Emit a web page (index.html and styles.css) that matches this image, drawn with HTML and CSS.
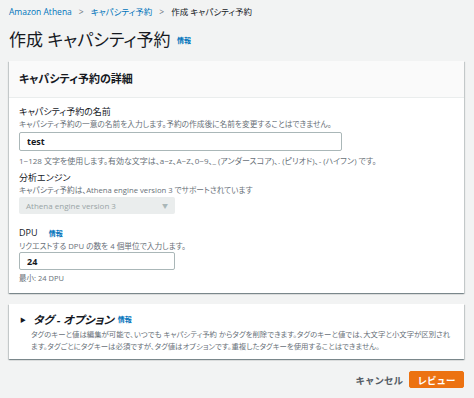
FILE: index.html
```html
<!DOCTYPE html>
<html lang="ja">
<head>
    <meta charset="UTF-8">
    <meta name="viewport" content="width=device-width, initial-scale=1.0">
    <title>作成 キャパシティ予約</title>
    <link rel="stylesheet" href="styles.css">
</head>
<body>

<div class="page">
    <nav class="breadcrumb">
        <a href="#">Amazon Athena</a>
        <span class="sep">&gt;</span>
        <a href="#">キャパシティ予約</a>
        <span class="sep">&gt;</span>
        <span class="current">作成 キャパシティ予約</span>
    </nav>

    <h1 class="title">作成 キャパシティ予約 <a class="info" href="#">情報</a></h1>

    <div class="card">
        <div class="card-header">
            <h2>キャパシティ予約の詳細</h2>
        </div>
        <div class="card-body">
            <div class="field">
                <label class="label" for="name">キャパシティ予約の名前</label>
                <p class="desc">キャパシティ予約の一意の名前を入力します。予約の作成後に名前を変更することはできません。</p>
                <input class="input wide" type="text" id="name" value="test">
                <p class="hint">1~128 文字を使用します。有効な文字は、a~z、A~Z、0~9、_ (アンダースコア)、. (ピリオド)、- (ハイフン) です。</p>
            </div>

            <div class="field field-select">
                <label class="label">分析エンジン</label>
                <p class="desc">キャパシティ予約は、Athena engine version 3 でサポートされています</p>
                <div class="select">
                    <span>Athena engine version 3</span>
                    <span class="caret">&#9660;</span>
                </div>
            </div>

            <div class="field">
                <label class="label" for="dpu">DPU <a class="info" href="#">情報</a></label>
                <p class="desc">リクエストする DPU の数を 4 個単位で入力します。</p>
                <input class="input narrow" type="text" id="dpu" value="24">
                <p class="hint">最小: 24 DPU</p>
            </div>
        </div>
    </div>

    <div class="card tags">
        <h2 class="tags-title"><span class="arrow">&#9654;</span><span class="tags-name">タグ - オプション</span> <a class="info" href="#">情報</a></h2>
        <p class="desc">タグのキーと値は編集が可能で、いつでも キャパシティ予約 からタグを削除できます。タグのキーと値では、大文字と小文字が区別されます。タグごとにタグキーは必須ですが、タグ値はオプションです。重複したタグキーを使用することはできません。</p>
    </div>

    <div class="actions">
        <button class="btn-link" type="button">キャンセル</button>
        <button class="btn-primary" type="button">レビュー</button>
    </div>
</div>

</body>
</html>
```

FILE: styles.css
```css
body {
    margin: 0;
    background-color: #f2f3f3;
    color: #16191f;
    font-family: "Open Sans", "Noto Sans CJK JP", sans-serif;
    font-feature-settings: "palt";
}

a {
    color: #0073bb;
    text-decoration: none;
}

p {
    margin: 0;
}

.page {
    padding: 4px 10px 0 9px;
}

.breadcrumb {
    font-size: 8.5px;
    line-height: 16px;
    display: flex;
    gap: 7px;
    color: #16191f;
}

.breadcrumb .sep {
    color: #687078;
}

.title {
    margin: 8px 0 8px 0;
    font-size: 17px;
    font-weight: 400;
    line-height: 24px;
}

.info {
    font-size: 7px;
    font-weight: 700;
    vertical-align: middle;
}

.title .info {
    margin-left: 2px;
}

.card {
    background-color: #fff;
    box-shadow: 0 1px 1px 0 rgba(0, 28, 36, 0.3), 1px 1px 1px 0 rgba(0, 28, 36, 0.15), -1px 1px 1px 0 rgba(0, 28, 36, 0.15);
}

.card-header {
    background-color: #fafafa;
    border-bottom: 1px solid #eaeded;
    padding: 10px 10px;
}

.card-header h2 {
    margin: 0;
    font-size: 11px;
    font-weight: 700;
    line-height: 16px;
}

.card-body {
    padding: 8px 10px 9px 10px;
}

.field {
    margin-bottom: 5px;
}

.field-select {
    margin-bottom: 13px;
}

.field:last-child {
    margin-bottom: 0;
}

.label {
    display: block;
    font-size: 9px;
    line-height: 12px;
}

.label .info {
    margin-left: 9px;
}

.desc {
    font-size: 7.7px;
    line-height: 12px;
    color: #687078;
}

.input {
    display: block;
    box-sizing: border-box;
    height: 19px;
    margin-top: 2px;
    padding: 0 7px;
    border: 1px solid #aab7b8;
    border-radius: 2px;
    font-family: inherit;
    font-size: 9px;
    font-weight: 700;
    color: #16191f;
}

.input.wide {
    width: 323px;
}

.input.narrow {
    width: 156px;
    height: 18px;
    margin-top: 0;
}

.hint {
    margin-top: 4px;
    font-size: 8px;
    line-height: 12px;
    color: #687078;
}

.input.narrow + .hint {
    margin-top: 2px;
    font-size: 7.5px;
}

.select {
    box-sizing: border-box;
    width: 156px;
    height: 17px;
    margin-top: 1px;
    padding: 0 7px;
    display: flex;
    align-items: center;
    justify-content: space-between;
    background-color: #eaeded;
    border-radius: 2px;
    color: #98a4a5;
    font-size: 8px;
}

.select .caret {
    font-size: 6px;
    color: #aab7b8;
}

.tags {
    margin-top: 11px;
    padding: 9px 10px 7px 10px;
}

.tags-title {
    margin: 0;
    display: flex;
    align-items: center;
    font-size: 11.2px;
    font-weight: 700;
    line-height: 14px;
}

.tags-name {
    font-style: italic;
    margin-right: 4px;
}

.tags-title .arrow {
    font-size: 6px;
    margin-right: 7px;
    margin-left: 1px;
}

.tags .desc {
    margin-top: 1px;
    padding-left: 12px;
    font-size: 7.4px;
}

.actions {
    display: flex;
    justify-content: flex-end;
    align-items: center;
    gap: 6px;
    margin-top: 12px;
}

.btn-link {
    background: none;
    border: none;
    padding: 0;
    font-family: inherit;
    font-size: 9.5px;
    font-weight: 700;
    color: #545b64;
    cursor: pointer;
}

.btn-primary {
    background-color: #ec7211;
    border: 1px solid #ec7211;
    border-radius: 2px;
    width: 55px;
    height: 17px;
    padding: 0;
    font-family: inherit;
    font-size: 9.5px;
    font-weight: 700;
    color: #fff;
    cursor: pointer;
}
```
